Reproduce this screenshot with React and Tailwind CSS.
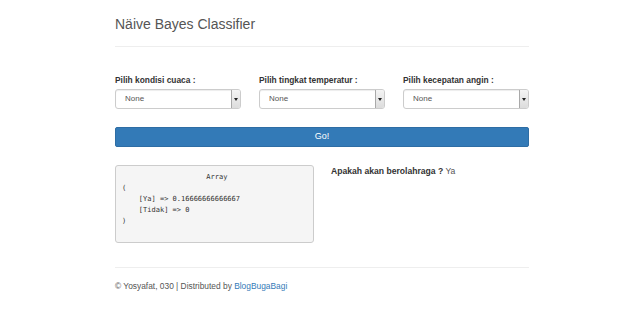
import { useState } from "react";

const selects = [
  { label: "Pilih kondisi cuaca :", name: "cuaca" },
  { label: "Pilih tingkat temperatur :", name: "temperatur" },
  { label: "Pilih kecepatan angin :", name: "angin" },
];

function FakeSelect({ value }) {
  return (
    <div className="flex h-[20px] items-stretch overflow-hidden rounded-[3px] border border-[#cccccc] bg-white shadow-[inset_0_1px_1px_rgba(0,0,0,0.075)]">
      <span className="flex flex-1 items-center pl-[9px] text-[8px] text-[#555555]">
        {value}
      </span>
      <span className="flex w-[9px] items-center justify-center border-l border-[#a9a9a9] bg-gradient-to-b from-[#f4f4f4] to-[#dcdcdc]">
        <span className="block h-0 w-0 border-x-[2px] border-t-[3px] border-x-transparent border-t-[#222]" />
      </span>
    </div>
  );
}

export default function App() {
  const [values] = useState({ cuaca: "None", temperatur: "None", angin: "None" });

  return (
    <div className="min-h-[309px] bg-white font-['Liberation_Sans',Arial,sans-serif] text-[#333333]">
      <div className="ml-[115px] w-[414px] pt-[16px]">
        <h1 className="text-[14px] leading-[17px] text-[#555555]">
          Näive Bayes Classifier
        </h1>
        <hr className="mt-[13px] border-[#eeeeee]" />

        <div className="mt-[28px] grid grid-cols-3 gap-[18px]">
          {selects.map((s) => (
            <div key={s.name}>
              <label className="block text-[8.4px] font-bold leading-[10px] text-[#333]">
                {s.label}
              </label>
              <div className="mt-[4px]">
                <FakeSelect value={values[s.name]} />
              </div>
            </div>
          ))}
        </div>

        <button
          type="button"
          className="mt-[18px] flex h-[20px] w-full items-center justify-center rounded-[2px] border border-[#2e6da4] bg-[#337ab7] text-[9px] text-white"
        >
          Go!
        </button>

        <div className="mt-[18px] flex">
          <pre className="h-[78px] w-[199px] rounded-[3px] border border-[#cccccc] bg-[#f5f5f5] pl-[6px] pt-[6px] font-['DejaVu_Sans_Mono',monospace] text-[7px] leading-[11px] text-[#333]">
{"                    Array\n(\n    [Ya] => 0.16666666666667\n    [Tidak] => 0\n)"}
          </pre>
          <p className="ml-[17px] pt-[1px] text-[8.6px] leading-[11px]">
            <span className="font-bold">Apakah akan berolahraga ?</span>{" "}
            <span className="text-[#555]">Ya</span>
          </p>
        </div>

        <hr className="mt-[24px] border-[#eeeeee]" />
        <p className="mt-[13px] text-[8.4px] leading-[10px] text-[#555555]">
          © Yosyafat, 030 | Distributed by{" "}
          <a href="#" className="text-[#337ab7]">
            BlogBugaBagi
          </a>
        </p>
      </div>
    </div>
  );
}
